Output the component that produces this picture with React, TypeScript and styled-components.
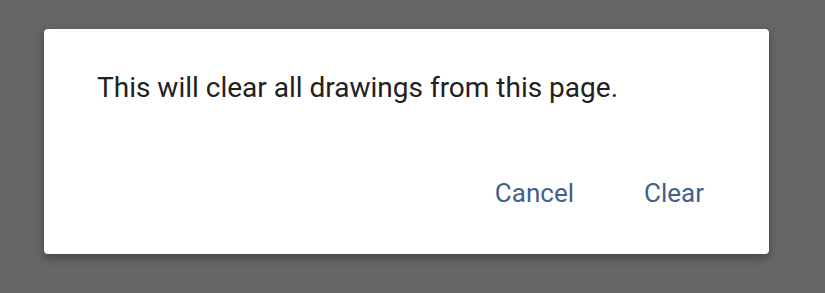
import styled, { createGlobalStyle } from 'styled-components';

const GlobalStyle = createGlobalStyle`
  html, body {
    margin: 0;
    padding: 0;
    background: #666666;
    font-family: Roboto, "Noto Sans", sans-serif;
  }
`;

const Backdrop = styled.div`
  width: 825px;
  height: 293px;
  box-sizing: border-box;
  padding: 29px 56px 39px 44px;
  background: #666666;
`;

const Dialog = styled.div`
  height: 100%;
  box-sizing: border-box;
  display: flex;
  flex-direction: column;
  justify-content: space-between;
  background: #ffffff;
  border-radius: 4px;
  box-shadow: 0 4px 10px rgba(0, 0, 0, 0.35);
  padding: 42px 49px 46px 53px;
`;

const Message = styled.p`
  margin: 0;
  font-size: 28px;
  line-height: 33px;
  color: #212121;
`;

const Actions = styled.div`
  display: flex;
  justify-content: flex-end;
  gap: 38px;
`;

const TextButton = styled.button`
  border: none;
  background: none;
  padding: 0 16px;
  font-family: inherit;
  font-size: 26px;
  line-height: 30px;
  color: #44608c;
  cursor: pointer;
`;

export default function App() {
  return (
    <>
      <GlobalStyle />
      <Backdrop>
        <Dialog>
          <Message>This will clear all drawings from this page.</Message>
          <Actions>
            <TextButton>Cancel</TextButton>
            <TextButton>Clear</TextButton>
          </Actions>
        </Dialog>
      </Backdrop>
    </>
  );
}
